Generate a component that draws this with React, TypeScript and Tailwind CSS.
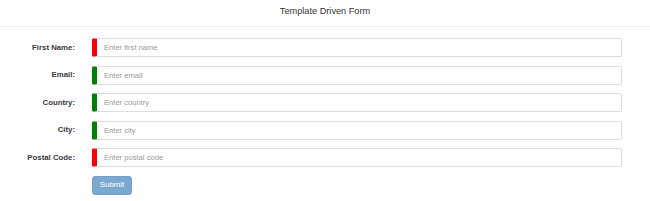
const fields = [
  { label: "First Name:", placeholder: "Enter first name", valid: false },
  { label: "Email:", placeholder: "Enter email", valid: true },
  { label: "Country:", placeholder: "Enter country", valid: true },
  { label: "City:", placeholder: "Enter city", valid: true },
  { label: "Postal Code:", placeholder: "Enter postal code", valid: false },
];

export default function App() {
  return (
    <div className="h-[201px] w-[650px] bg-white font-['Liberation_Sans',Arial,sans-serif] text-[#333]">
      <header className="h-[27px] border-b border-[#eee] pt-[5.5px] text-center">
        <h1 className="text-[9.2px] leading-[11px]">Template Driven Form</h1>
      </header>

      <form className="flex flex-col gap-[8.5px] pt-[11px]">
        {fields.map((f) => (
          <div key={f.label} className="flex h-[19px] items-center">
            <label className="w-[75px] text-right text-[7.8px] font-bold text-[#3a3a3a]">
              {f.label}
            </label>
            <input
              type="text"
              placeholder={f.placeholder}
              className={
                "ml-[17px] h-[19px] w-[530px] rounded-[2px] border border-l-[5px] border-[#ddd] bg-white pl-[7px] text-[7.6px] outline-none placeholder:text-[#999] " +
                (f.valid ? "border-l-[#008000]" : "border-l-[#ff0000]")
              }
            />
          </div>
        ))}
        <div className="flex pl-[92px]">
          <button
            type="button"
            disabled
            className="h-[19px] w-[40px] rounded-[3px] border border-[#78a0c6] bg-[#7aa8d0] text-[7.8px] leading-none text-white"
          >
            Submit
          </button>
        </div>
      </form>
    </div>
  );
}
